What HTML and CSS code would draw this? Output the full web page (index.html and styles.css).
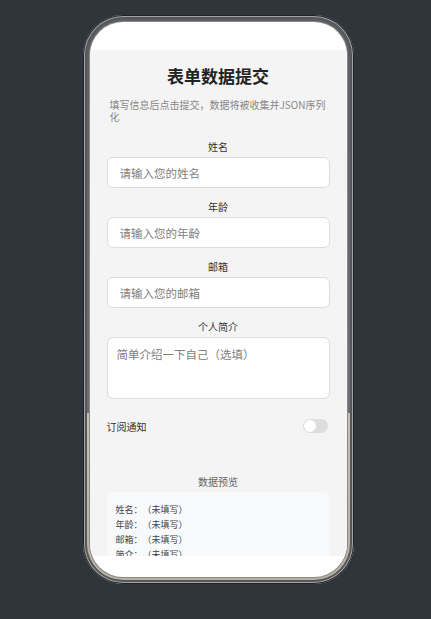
FILE: index.html
```html
<!DOCTYPE html>
<html lang="zh-CN">
<head>
    <meta charset="UTF-8">
    <meta name="viewport" content="width=device-width, initial-scale=1.0">
    <title>表单数据提交</title>
    <link rel="stylesheet" href="styles.css">
</head>
<body>

<div class="phone">
    <div class="screen">
        <div class="status-bar"></div>
        <div class="content">
            <h1>表单数据提交</h1>
            <p class="subtitle">填写信息后点击提交，数据将被收集并JSON序列化</p>

            <div class="field">
                <label>姓名</label>
                <input type="text" placeholder="请输入您的姓名">
            </div>
            <div class="field">
                <label>年龄</label>
                <input type="text" placeholder="请输入您的年龄">
            </div>
            <div class="field">
                <label>邮箱</label>
                <input type="text" placeholder="请输入您的邮箱">
            </div>
            <div class="field">
                <label>个人简介</label>
                <textarea placeholder="简单介绍一下自己（选填）"></textarea>
            </div>

            <div class="switch-row">
                <span>订阅通知</span>
                <div class="switch"><div class="knob"></div></div>
            </div>

            <div class="preview-title">数据预览</div>
            <div class="preview">
                <div>姓名：（未填写）</div>
                <div>年龄：（未填写）</div>
                <div>邮箱：（未填写）</div>
                <div>简介：（未填写）</div>
            </div>
        </div>
        <div class="home-bar"></div>
    </div>
</div>

</body>
</html>
```

FILE: styles.css
```css
body {
    font-family: "Noto Sans CJK SC", "DejaVu Sans", sans-serif;
    background-color: #30343b;
    margin: 0;
    height: 619px;
    display: flex;
    justify-content: center;
    align-items: flex-start;
    padding: 15px 0 0 5px;
    box-sizing: border-box;
    text-spacing-trim: space-all;
}
.phone {
    padding: 7px;
    border-radius: 40px;
    background: linear-gradient(180deg, #5b5d61 0%, #6e6f72 70%, #c9c1ad 70%, #b7b0a0 100%);
    box-shadow: inset 0 0 0 1px #1f2226, inset 0 0 0 2px #a3a3a3, inset 0 0 0 4px #55575b;
}
.screen {
    width: 257px;
    height: 555px;
    border-radius: 33px;
    background: #fff;
    overflow: hidden;
    display: flex;
    flex-direction: column;
    box-shadow: 0 0 0 1px #8a8a8a;
}
.status-bar {
    height: 28px;
    flex-shrink: 0;
}
.home-bar {
    height: 21px;
    flex-shrink: 0;
}
.content {
    flex: 1;
    background: #f4f4f4;
    padding: 14px 17px 0;
    overflow: hidden;
}
h1 {
    margin: 0;
    font-size: 17px;
    line-height: 24px;
    text-align: center;
    color: #222;
}
.subtitle {
    margin: 11px 0 17px;
    padding: 0 3px;
    font-size: 10px;
    line-height: 12px;
    color: #888;
}
.field {
    margin-bottom: 12px;
}
.field label {
    display: block;
    text-align: center;
    font-size: 10px;
    line-height: 14px;
    color: #333;
    margin-bottom: 3px;
}
input, textarea {
    display: block;
    width: 100%;
    box-sizing: border-box;
    border: 1px solid #dcdcdc;
    border-radius: 6px;
    background: #fff;
    font-family: inherit;
    font-size: 11.5px;
    color: #333;
    outline: none;
}
input {
    height: 31px;
    padding: 0 12px;
}
textarea {
    height: 62px;
    padding: 8px 9px;
    resize: none;
}
input::placeholder, textarea::placeholder {
    color: #808080;
}
.switch-row {
    display: flex;
    justify-content: space-between;
    align-items: center;
    height: 30px;
    font-size: 10px;
    color: #333;
}
.switch {
    width: 25px;
    height: 14px;
    border-radius: 7px;
    background: #dddddd;
    position: relative;
    margin-right: 2px;
}
.knob {
    position: absolute;
    top: 1px;
    left: 1px;
    width: 12px;
    height: 12px;
    border-radius: 50%;
    background: #fff;
}
.preview-title {
    margin-top: 34px;
    text-align: center;
    font-size: 10px;
    line-height: 14px;
    color: #666;
}
.preview {
    margin-top: 3px;
    background: #f8f9fb;
    border-radius: 6px;
    padding: 10px 9px;
    font-size: 9px;
    line-height: 15px;
    color: #444;
}
```
